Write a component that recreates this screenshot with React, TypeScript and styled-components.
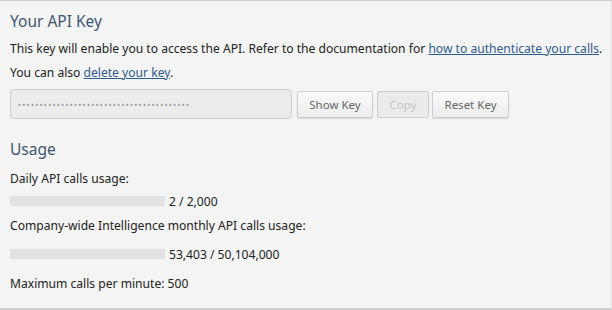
import React from "react";
import styled, { createGlobalStyle } from "styled-components";

const Global = createGlobalStyle`
  html, body { margin: 0; padding: 0; background: #fff; }
  body { font-family: "Noto Sans", "Liberation Sans", sans-serif; }
`;

const Panel = styled.div`
  box-sizing: border-box;
  width: 612px;
  height: 310px;
  background: #f4f4f4;
  border-top: 1px solid #cfcfcf;
  border-right: 1px solid #e2e2e2;
  border-bottom: 2px solid #cfcfcf;
  padding: 0 10px;
  color: #222;
  font-size: 12.1px;
`;

const Heading = styled.h2<{ $top: number }>`
  margin: ${(p) => p.$top}px 0 0;
  font-size: 15.5px;
  font-weight: 400;
  color: #3d5670;
  line-height: 22px;
`;

const Para = styled.p<{ $top: number }>`
  margin: ${(p) => p.$top}px 0 0;
  line-height: 18px;
  white-space: nowrap;
`;

const Link = styled.a`
  color: #2d5b8c;
  text-decoration: underline;
`;

const KeyRow = styled.div`
  display: flex;
  align-items: center;
  gap: 3px;
  margin-top: 7px;
`;

const KeyInput = styled.div`
  box-sizing: border-box;
  width: 282px;
  height: 30px;
  border: 1px solid #cfcfcf;
  border-radius: 4px;
  background: #ececec;
  padding: 0 7px;
  display: flex;
  align-items: center;
  color: #999;
  font-size: 8px;
  letter-spacing: 1.3px;
  overflow: hidden;
  margin-right: 2px;
`;

const Button = styled.button<{ $w: number; $gapAfter?: number; $disabled?: boolean }>`
  box-sizing: border-box;
  width: ${(p) => p.$w}px;
  height: 27px;
  margin-right: ${(p) => p.$gapAfter ?? 0}px;
  border: 1px solid #cdcdcd;
  border-radius: 2px;
  background: ${(p) => (p.$disabled ? "#ebebeb" : "linear-gradient(#fafafa, #ededed)")};
  color: ${(p) => (p.$disabled ? "#c4c4c4" : "#666")};
  font-family: inherit;
  font-size: 11.5px;
  padding: 0;
  box-shadow: ${(p) => (p.$disabled ? "none" : "0 1px 1px rgba(0,0,0,0.12)")};
`;

const BarRow = styled.div<{ $top: number }>`
  display: flex;
  align-items: center;
  gap: 4px;
  margin-top: ${(p) => p.$top}px;
  height: 18px;
`;

const Bar = styled.div`
  width: 155px;
  height: 10px;
  background: #e2e2e2;
`;

const BarValue = styled.span`
  font-size: 12.1px;
`;

export default function App() {
  return (
    <>
      <Global />
      <Panel>
        <Heading $top={9}>Your API Key</Heading>
        <Para $top={8}>
          This key will enable you to access the API. Refer to the documentation for{" "}
          <Link href="#">how to authenticate your calls</Link>.
        </Para>
        <Para $top={6}>
          You can also <Link href="#">delete your key</Link>.
        </Para>
        <KeyRow>
          <KeyInput>{"•".repeat(40)}</KeyInput>
          <Button $w={76} $gapAfter={1}>Show Key</Button>
          <Button $w={52} $disabled>Copy</Button>
          <Button $w={77}>Reset Key</Button>
        </KeyRow>
        <Heading $top={19}>Usage</Heading>
        <Para $top={10}>Daily API calls usage:</Para>
        <BarRow $top={4}>
          <Bar />
          <BarValue>2 / 2,000</BarValue>
        </BarRow>
        <Para $top={7}>Company-wide Intelligence monthly API calls usage:</Para>
        <BarRow $top={10}>
          <Bar />
          <BarValue>53,403 / 50,104,000</BarValue>
        </BarRow>
        <Para $top={12}>Maximum calls per minute: 500</Para>
      </Panel>
    </>
  );
}
